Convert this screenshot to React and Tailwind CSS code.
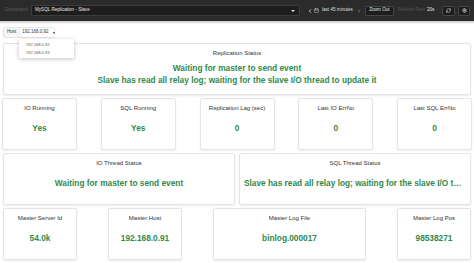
import { ChevronLeft, ChevronRight, Calendar, RefreshCw, Settings } from "lucide-react";

function Panel({ title, className = "", children }) {
  return (
    <div
      className={`bg-white border border-[#e4e4e4] rounded-[2px] shadow-[0_1px_2px_rgba(0,0,0,0.08)] h-[52px] flex flex-col items-center overflow-hidden ${className}`}
    >
      <div className="mt-[5px] h-[8px] leading-[8px] text-[6px] text-[#333]">{title}</div>
      {children}
    </div>
  );
}

function Value({ children }) {
  return (
    <div className="mt-[10px] w-full px-[4px] text-center text-[8.3px] leading-[12px] font-bold text-[#2f8a4c] truncate">
      {children}
    </div>
  );
}

export default function App() {
  return (
    <div className="w-[474px] h-[263px] bg-white overflow-hidden relative font-['Liberation_Sans',Arial,sans-serif]">
      {/* top bar */}
      <div className="h-[21px] bg-[#2b2b2c] flex items-center text-[4.6px]">
        <span className="ml-[5px] w-[26px] text-[#5c5c5c]">Dashboard</span>
        <div className="w-[269px] h-[11px] bg-[#1d1d1e] border border-[#3c3c3c] rounded-[1px] flex items-center justify-between pl-[3px] pr-[4px]">
          <span className="text-[#e6e6e6]">MySQL Replication - Slave</span>
          <span className="w-0 h-0 border-l-[2px] border-r-[2px] border-t-[2.5px] border-l-transparent border-r-transparent border-t-[#e6e6e6]" />
        </div>
        <ChevronLeft className="ml-[7px] text-[#ddd]" size={6} strokeWidth={3} />
        <Calendar className="ml-[1px] text-[#bbb]" size={5} strokeWidth={2.5} />
        <span className="ml-[3px] text-[#ddd]">last 45 minutes</span>
        <ChevronRight className="ml-[3px] text-[#777]" size={6} strokeWidth={3} />
        <div className="ml-[3px] w-[29px] h-[10px] bg-[#1d1d1e] border border-[#444] rounded-[1px] flex items-center justify-center text-[#e6e6e6]">
          Zoom Out
        </div>
        <span className="ml-[4px] text-[#555]">Refresh Rate</span>
        <span className="ml-[2px] text-[#e6e6e6]">20s</span>
        <div className="ml-[8px] w-[13px] h-[10px] bg-[#1d1d1e] border border-[#444] rounded-[1px] flex items-center justify-center">
          <RefreshCw className="text-[#ddd]" size={5} strokeWidth={2.5} />
        </div>
        <div className="ml-[3px] w-[12px] h-[10px] bg-[#1d1d1e] border border-[#444] rounded-[1px] flex items-center justify-center">
          <Settings className="text-[#ddd]" size={5} strokeWidth={3} />
        </div>
      </div>
      <div className="h-[3px] bg-gradient-to-b from-[#c4c4c4] to-white" />

      {/* host variable */}
      <div className="mt-[3px] ml-[3px] h-[11px] w-[52px] border border-[#e6e6e6] rounded-[1px] flex items-center text-[4.5px]">
        <span className="pl-[3px] pr-[3px] h-full flex items-center bg-[#f6f6f6] text-[#333] border-r border-[#ececec]">Host</span>
        <span className="ml-[2px] text-[#333]">192.168.0.92</span>
        <span className="ml-[4px] w-0 h-0 border-l-[1.5px] border-r-[1.5px] border-t-[2px] border-l-transparent border-r-transparent border-t-[#333]" />
      </div>

      {/* panels */}
      <div className="mt-[5px] px-[3px] flex flex-col gap-[3px]">
        <Panel title="Replication Status" className="w-full">
          <div className="mt-[5px] text-center text-[8.3px] leading-[12px] font-bold text-[#2f8a4c]">
            <div>Waiting for master to send event</div>
            <div>Slave has read all relay log; waiting for the slave I/O thread to update it</div>
          </div>
        </Panel>

        <div className="-mx-[1px] grid grid-cols-5 gap-x-[23.75px]">
          <Panel title="IO Running"><Value>Yes</Value></Panel>
          <Panel title="SQL Running"><Value>Yes</Value></Panel>
          <Panel title="Replication Lag (sec)"><Value>0</Value></Panel>
          <Panel title="Last IO ErrNo"><Value>0</Value></Panel>
          <Panel title="Last SQL ErrNo"><Value>0</Value></Panel>
        </div>

        <div className="flex gap-[4px]">
          <Panel title="IO Thread Status" className="flex-1 min-w-0">
            <Value>Waiting for master to send event</Value>
          </Panel>
          <Panel title="SQL Thread Status" className="flex-1 min-w-0">
            <Value>Slave has read all relay log; waiting for the slave I/O thread to update it</Value>
          </Panel>
        </div>

        <div className="flex justify-between">
          <Panel title="Master Server Id" className="w-[74px]"><Value>54.0k</Value></Panel>
          <Panel title="Master Host" className="w-[74px]"><Value>192.168.0.91</Value></Panel>
          <Panel title="Master Log File" className="w-[153px]"><Value>binlog.000017</Value></Panel>
          <Panel title="Master Log Pos" className="w-[74px]"><Value>98538271</Value></Panel>
        </div>
      </div>

      {/* host dropdown menu */}
      <div className="absolute left-[19px] top-[39px] w-[55px] h-[19px] bg-white rounded-[1px] shadow-[0_1px_4px_rgba(0,0,0,0.25)] flex flex-col justify-center gap-[3px] pl-[7px] text-[4px] leading-[5px] text-[#555]">
        <span>192.168.0.92</span>
        <span>192.168.0.93</span>
      </div>
    </div>
  );
}
